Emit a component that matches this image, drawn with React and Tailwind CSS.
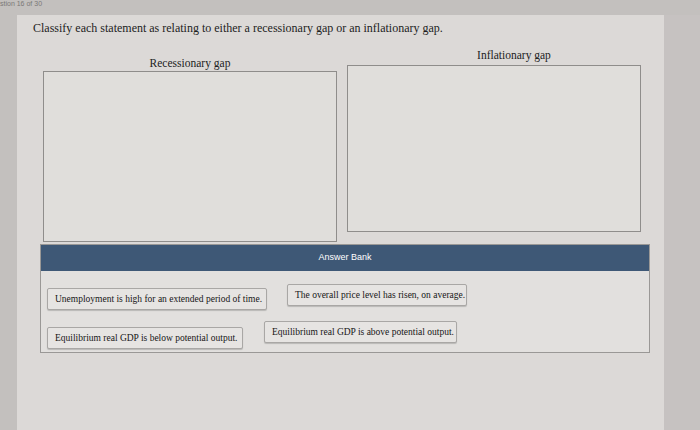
import React from 'react';

const serif = { fontFamily: '"Liberation Serif", "Times New Roman", serif' };

const Chip = ({ text, className = '' }) => (
  <div
    className={`h-[22px] px-[7px] flex items-center border border-[#a9a7a5] rounded-[2px] bg-[#e6e4e2] shadow-[0_1px_1px_rgba(0,0,0,0.18)] text-[9.5px] text-[#161616] whitespace-nowrap ${className}`}
    style={serif}
  >
    {text}
  </div>
);

const App = () => {
  return (
    <div className="w-[700px] h-[430px] bg-[#c3c0be] flex flex-col overflow-hidden">
      {/* top strip with question counter */}
      <div className="h-[15px] flex items-start">
        <span className="text-[7px] leading-[8px] text-[#7a7877] font-['Liberation_Sans',sans-serif]">
          stion 16 of 30
        </span>
      </div>

      <div className="flex-1 flex">
        <div className="w-[17px] shrink-0" />
        <div className="w-[647px] bg-[#dcd9d7] pt-[3px] flex flex-col">
          <p className="pl-[16px] text-[12px] text-[#1d1d1d] leading-[20px]" style={serif}>
            Classify each statement as relating to either a recessionary gap or an inflationary gap.
          </p>

          <div className="mt-[18px] pl-[26px] flex gap-[10px]">
            <div className="w-[294px] flex flex-col items-center">
              <span className="text-[11.5px] text-[#222] leading-[14px]" style={serif}>
                Recessionary gap
              </span>
              <div className="mt-[1px] w-full h-[171px] border border-[#8f8d8b] bg-[#e0dedb]" />
            </div>
            <div className="w-[294px] flex flex-col items-center">
              <span className="text-[11.5px] text-[#222] leading-[14px] -mt-[8px] pl-[40px]" style={serif}>
                Inflationary gap
              </span>
              <div className="mt-[3px] w-full h-[167px] border border-[#8f8d8b] bg-[#e0dedb]" />
            </div>
          </div>

          <div className="mt-[2px] ml-[23px] w-[610px] border border-[#9a9896]">
            <div className="h-[26px] bg-[#3e5876] flex items-center justify-center">
              <span className="text-[9px] text-white font-['Liberation_Sans',sans-serif]">Answer Bank</span>
            </div>
            <div className="bg-[#e2e0de] px-[6px] pt-[15px] pb-[3px] flex flex-col gap-[15px]">
              <div className="flex gap-[20px] items-start">
                <Chip text="Unemployment is high for an extended period of time." className="w-[220px] mt-[2px]" />
                <Chip text="The overall price level has risen, on average." className="w-[180px] -mt-[2px]" />
              </div>
              <div className="flex gap-[21px] items-start">
                <Chip text="Equilibrium real GDP is below potential output." className="w-[196px] mt-[2px]" />
                <Chip text="Equilibrium real GDP is above potential output." className="w-[193px] -mt-[4px]" />
              </div>
            </div>
          </div>
        </div>
        <div className="flex-1 bg-[#c6c2c1]" />
      </div>
    </div>
  );
};

export default App;
